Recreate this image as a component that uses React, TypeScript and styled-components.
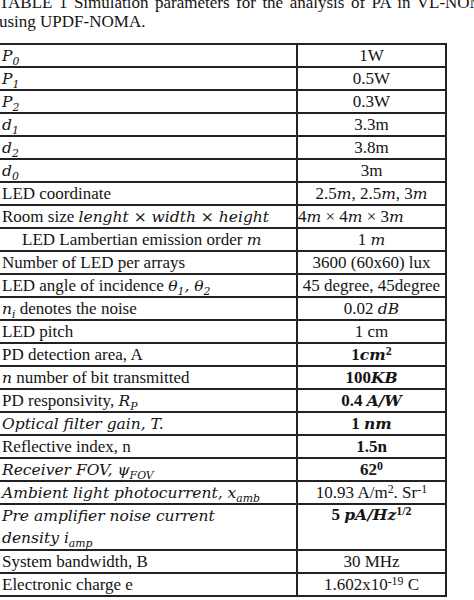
import React from "react";
import styled, { createGlobalStyle } from "styled-components";

const GlobalStyle = createGlobalStyle`
  html, body {
    margin: 0;
    padding: 0;
    background: #ffffff;
  }
  body {
    font-family: "Liberation Serif", "Times New Roman", serif;
    color: #141414;
  }
`;

const Page = styled.div`
  width: 474px;
  height: 600px;
  overflow: hidden;
`;

const Caption = styled.div`
  margin: -7px 0 0 -1px;
  font-size: 17px;
  line-height: 19px;
`;

const CaptionLine = styled.div<{ $justify?: boolean }>`
  width: ${(p) => (p.$justify ? "498px" : "auto")};
  text-align: left;
  text-align-last: ${(p) => (p.$justify ? "justify" : "left")};
`;

const Table = styled.table`
  margin: 12px 0 0 -2px;
  border-collapse: collapse;
  table-layout: fixed;
  width: 449px;
  font-size: 17px;
`;

const Row = styled.tr<{ $tall?: boolean }>`
  height: ${(p) => (p.$tall ? "46px" : "23px")};
`;

const Label = styled.td<{ $indent?: boolean; $top?: boolean }>`
  width: 294px;
  padding: 0 0 0 ${(p) => (p.$indent ? "22px" : "2px")};
  border: 2px solid #222;
  line-height: ${(p) => (p.$top ? "21px" : "19px")};
  text-align: left;
  vertical-align: ${(p) => (p.$top ? "top" : "middle")};
  white-space: nowrap;
  overflow: visible;
`;

const Value = styled.td<{ $bold?: boolean; $left?: boolean; $top?: boolean }>`
  padding: 0;
  border: 2px solid #222;
  line-height: 19px;
  font-weight: ${(p) => (p.$bold ? 700 : 400)};
  text-align: ${(p) => (p.$left ? "left" : "center")};
  vertical-align: ${(p) => (p.$top ? "top" : "middle")};
  white-space: nowrap;
`;

const M = styled.span`
  font-family: "DejaVu Serif", "Liberation Serif", serif;
  font-style: italic;
  font-size: 15.5px;
`;

const Sub = styled.sub`
  font-size: 0.7em;
  line-height: 0;
  vertical-align: -0.35em;
`;

const Sup = styled.sup`
  font-size: 0.7em;
  line-height: 0;
  vertical-align: 0.45em;
`;

export default function App() {
  return (
    <Page>
      <GlobalStyle />
      <Caption>
        <CaptionLine $justify>
          TABLE 1 Simulation parameters for the analysis of PA in VL-NOMA
        </CaptionLine>
        <CaptionLine>using UPDF-NOMA.</CaptionLine>
      </Caption>
      <Table>
        <tbody>
          <Row>
            <Label>
              <M>
                P<Sub>0</Sub>
              </M>
            </Label>
            <Value>1W</Value>
          </Row>
          <Row>
            <Label>
              <M>
                P<Sub>1</Sub>
              </M>
            </Label>
            <Value>0.5W</Value>
          </Row>
          <Row>
            <Label>
              <M>
                P<Sub>2</Sub>
              </M>
            </Label>
            <Value>0.3W</Value>
          </Row>
          <Row>
            <Label>
              <M>
                d<Sub>1</Sub>
              </M>
            </Label>
            <Value>3.3m</Value>
          </Row>
          <Row>
            <Label>
              <M>
                d<Sub>2</Sub>
              </M>
            </Label>
            <Value>3.8m</Value>
          </Row>
          <Row>
            <Label>
              <M>
                d<Sub>0</Sub>
              </M>
            </Label>
            <Value>3m</Value>
          </Row>
          <Row>
            <Label>LED coordinate</Label>
            <Value>
              2.5<M>m</M>, 2.5<M>m</M>, 3<M>m</M>
            </Value>
          </Row>
          <Row>
            <Label>
              Room size <M>lenght × width × height</M>
            </Label>
            <Value $left>
              4<M>m</M> × 4<M>m</M> × 3<M>m</M>
            </Value>
          </Row>
          <Row>
            <Label $indent>
              LED Lambertian emission order <M>m</M>
            </Label>
            <Value>
              1 <M>m</M>
            </Value>
          </Row>
          <Row>
            <Label>Number of LED per arrays</Label>
            <Value>3600 (60x60) lux</Value>
          </Row>
          <Row>
            <Label>
              LED angle of incidence{" "}
              <M>
                θ<Sub>1</Sub>, θ<Sub>2</Sub>
              </M>
            </Label>
            <Value>45 degree, 45degree</Value>
          </Row>
          <Row>
            <Label>
              <M>
                n<Sub>i</Sub>
              </M>{" "}
              denotes the noise
            </Label>
            <Value>
              0.02 <M>dB</M>
            </Value>
          </Row>
          <Row>
            <Label>LED pitch</Label>
            <Value>1 cm</Value>
          </Row>
          <Row>
            <Label>PD detection area, A</Label>
            <Value $bold>
              1<M>cm</M>
              <Sup>2</Sup>
            </Value>
          </Row>
          <Row>
            <Label>
              <M>n</M> number of bit transmitted
            </Label>
            <Value $bold>
              100<M>KB</M>
            </Value>
          </Row>
          <Row>
            <Label>
              PD responsivity,{" "}
              <M>
                R<Sub>P</Sub>
              </M>
            </Label>
            <Value $bold>
              0.4 <M>A/W</M>
            </Value>
          </Row>
          <Row>
            <Label>
              <M>Optical filter gain, T.</M>
            </Label>
            <Value $bold>
              1 <M>nm</M>
            </Value>
          </Row>
          <Row>
            <Label>Reflective index, n</Label>
            <Value $bold>1.5n</Value>
          </Row>
          <Row>
            <Label>
              <M>
                Receiver FOV, ψ<Sub>FOV</Sub>
              </M>
            </Label>
            <Value $bold>
              62<Sup>0</Sup>
            </Value>
          </Row>
          <Row>
            <Label>
              <M>
                Ambient light photocurrent, x<Sub>amb</Sub>
              </M>
            </Label>
            <Value>
              10.93 A/m<Sup>2</Sup>. Sr<Sup>-1</Sup>
            </Value>
          </Row>
          <Row $tall>
            <Label $top>
              <M>
                Pre amplifier noise current
                <br />
                density i<Sub>amp</Sub>
              </M>
            </Label>
            <Value $bold $top>
              5 <M>pA/Hz</M>
              <Sup>1/2</Sup>
            </Value>
          </Row>
          <Row>
            <Label>System bandwidth, B</Label>
            <Value>30 MHz</Value>
          </Row>
          <Row>
            <Label>Electronic charge e</Label>
            <Value>
              1.602x10<Sup>-19</Sup> C
            </Value>
          </Row>
        </tbody>
      </Table>
    </Page>
  );
}
